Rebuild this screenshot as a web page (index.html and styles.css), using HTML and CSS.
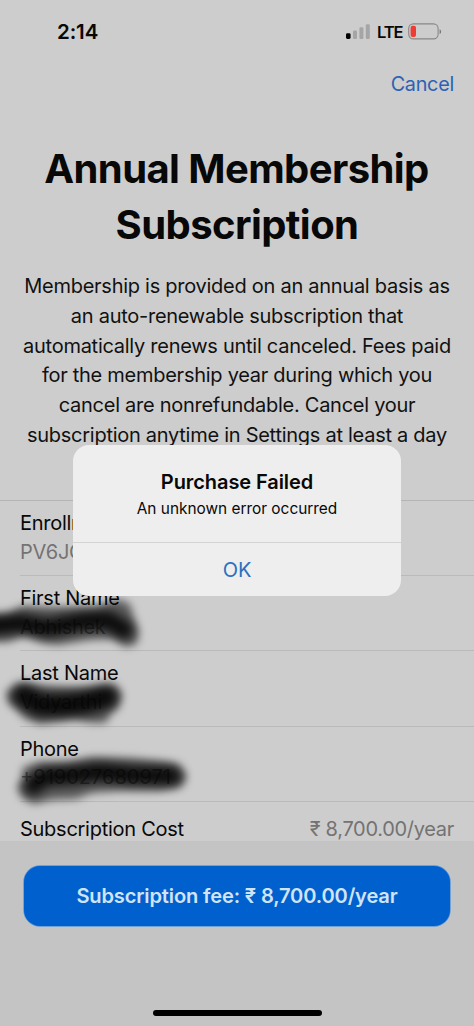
FILE: index.html
```html
<!DOCTYPE html>
<html lang="en">
<head>
<meta charset="utf-8">
<title>Annual Membership Subscription</title>
<link rel="stylesheet" href="styles.css">
</head>
<body>
<main class="screen">
  <header class="status">
    <span class="time">2:14</span>
    <div class="indicators">
      <svg class="signal" width="25" height="16" viewBox="0 0 25 16">
        <rect x="0" y="9.3" width="4.6" height="5.7" rx="1.4" fill="#000"/>
        <rect x="7" y="6.5" width="4" height="8.5" rx="1.2" fill="#a5a5a5"/>
        <rect x="13.4" y="3.3" width="4" height="11.7" rx="1.2" fill="#a5a5a5"/>
        <rect x="19.8" y="0.3" width="4" height="14.7" rx="1.2" fill="#a5a5a5"/>
      </svg>
      <span class="network">LTE</span>
      <svg class="battery" width="34" height="17" viewBox="0 0 34 17">
        <rect x="0.7" y="0.9" width="29.4" height="15" rx="4.6" fill="none" stroke="#8b8786" stroke-width="1.1"/>
        <rect x="2.6" y="2.8" width="5.4" height="11.2" rx="2" fill="#ee3b34"/>
        <path d="M31.6 6.2c2 .9 2 4 0 4.8z" fill="#777"/>
      </svg>
    </div>
  </header>
  <nav class="nav"><a class="cancel">Cancel</a></nav>
  <h1 class="title"><span>Annual Membership</span><br>Subscription</h1>
  <p class="terms">
    <span class="line">Membership is provided on an annual basis as</span>
    <span class="line">an auto-renewable subscription that</span>
    <span class="line">automatically renews until canceled. Fees paid</span>
    <span class="line">for the membership year during which you</span>
    <span class="line">cancel are nonrefundable. Cancel your</span>
    <span class="line">subscription anytime in Settings at least a day</span>
  </p>
  <section class="details">
    <div class="row"><span class="label">Enrollment ID</span><span class="value">PV6JC</span></div>
    <div class="row"><span class="label">First Name</span><span class="value">Abhishek</span></div>
    <div class="row"><span class="label">Last Name</span><span class="value">Vidyarthi</span></div>
    <div class="row"><span class="label">Phone</span><span class="value phone">+919027680971</span></div>
    <div class="cost"><span class="label">Subscription Cost</span><span class="price">₹ 8,700.00/year</span></div>
  </section>
  <footer class="footer">
    <button class="pay">Subscription fee: ₹ 8,700.00/year</button>
    <div class="home"></div>
  </footer>

  <svg class="marker" width="220" height="240" viewBox="0 590 220 240">
    <defs>
      <filter id="soft" filterUnits="userSpaceOnUse" x="-40" y="580" width="270" height="260"><feGaussianBlur stdDeviation="4"/></filter>
      <filter id="core" filterUnits="userSpaceOnUse" x="-40" y="580" width="270" height="260"><feGaussianBlur stdDeviation="5.5"/></filter>
    </defs>
    <g filter="url(#soft)" fill="#000" fill-opacity=".55">
      <path d="M-16 615L8 614 22 606 60 607 95 607 119 599 130 604 134 618 139 632 137 644 126 647 113 639 90 640 58 645 43 643 24 636 8 642-16 642Z"/>
      <path d="M6 692L18 684 38 685 70 687 96 687 114 685 122 694 118 708 111 713 106 723 92 723 74 719 54 722 40 724 24 718 16 708 8 703Z"/>
      <path d="M22 768L38 762 66 762 92 757 132 758 162 761 178 764 187 776 181 787 160 791 120 791 92 793 76 799 52 800 34 804 22 798 17 787 23 778Z"/>
    </g>
    <g filter="url(#core)" fill="none" stroke="#000" stroke-opacity=".88" stroke-linecap="round" stroke-linejoin="round">
      <path d="M-8 626L20 623 48 628 84 621 108 620 124 630" stroke-width="19"/>
      <path d="M24 696L40 705 64 705 84 703 106 697" stroke-width="24"/>
      <path d="M33 786L44 777 74 775 100 772 130 775 172 776" stroke-width="19"/>
    </g>
  </svg>

  <section class="alert" role="alertdialog">
    <div class="message">
      <h2 class="alert-title">Purchase Failed</h2>
      <p class="alert-text">An unknown error occurred</p>
    </div>
    <button class="ok">OK</button>
  </section>
</main>
</body>
</html>
```
FILE: styles.css
```css
* { box-sizing: border-box; }
body { margin: 0; font-family: Inter, "Liberation Sans", sans-serif; color: #080808; }
button { font-family: inherit; border: 0; }
.screen {
  position: relative; width: 474px; height: 1026px; overflow: hidden;
  display: flex; flex-direction: column; background: #cdcdcd;
}
.status {
  height: 60px; flex: none; padding: 3px 32px 0 57px;
  display: flex; justify-content: space-between; align-items: center;
}
.time { font-size: 20.5px; font-weight: 600; letter-spacing: -.1px; }
.indicators { display: flex; align-items: center; }
.network { margin-left: 6px; font-size: 16.5px; font-weight: 600; letter-spacing: -1.1px; width: 31px; }
.signal, .battery { display: block; flex: none; }
.nav { height: 48px; flex: none; padding: 0 20px; display: flex; align-items: center; justify-content: flex-end; }
.cancel { color: #2b62b5; font-size: 19.8px; letter-spacing: -.25px; }
.title {
  flex: none; margin: 33px 0 0; text-align: center;
  font-size: 40px; line-height: 56px; font-weight: 700; letter-spacing: -.58px;
}
.title span { margin-right: 1px; }
.terms {
  flex: none; margin: 19px 0 0; height: 228px; font-size: 20px; line-height: 29.8px;
  letter-spacing: -.27px; color: #111;
}
.line { display: block; text-align: center; white-space: nowrap; }
.details { flex: none; height: 341px; border-top: 1px solid #b4b4b4; }
.row {
  height: 75.2px; margin-left: 20px; border-bottom: 1px solid #bababa; padding-top: 8px;
  display: flex; flex-direction: column;
}
.label, .value, .price { font-size: 20px; line-height: 28.5px; letter-spacing: -.27px; }
.value, .price { color: #737373; }
.price { letter-spacing: -.3px; }
.phone { letter-spacing: 0; }
.cost { display: flex; justify-content: space-between; padding: 13px 20px 0; }
.footer {
  flex: 1; background: #c4c4c4; padding: 25px 24px 0;
  display: flex; flex-direction: column; align-items: center;
}
.pay {
  width: 426px; height: 60px; border-radius: 16px; background: #0060ce; color: #d1e4f6;
  box-shadow: 0 0 0 .7px #5795d8; font-size: 20.1px; font-weight: 600; letter-spacing: -.15px;
}
.home { width: 169px; height: 6px; margin-top: 84px; border-radius: 3px; background: #000; }
.marker { position: absolute; left: 0; top: 590px; }
.alert {
  position: absolute; left: 73px; top: 445px; width: 328px; height: 151px;
  border-radius: 16px; overflow: hidden; background: #eee; display: flex; flex-direction: column;
}
.message { height: 98px; border-bottom: 1px solid #d3d3d3; padding-top: 25px; text-align: center; }
.alert-title { margin: 0; font-size: 20px; line-height: 25px; font-weight: 600; letter-spacing: -.08px; }
.alert-text { margin: 3px 0 0; font-size: 15.4px; line-height: 21px; }
.ok { flex: 1; padding: 0; background: transparent; color: #2a70c0; font-size: 20px; }
```
